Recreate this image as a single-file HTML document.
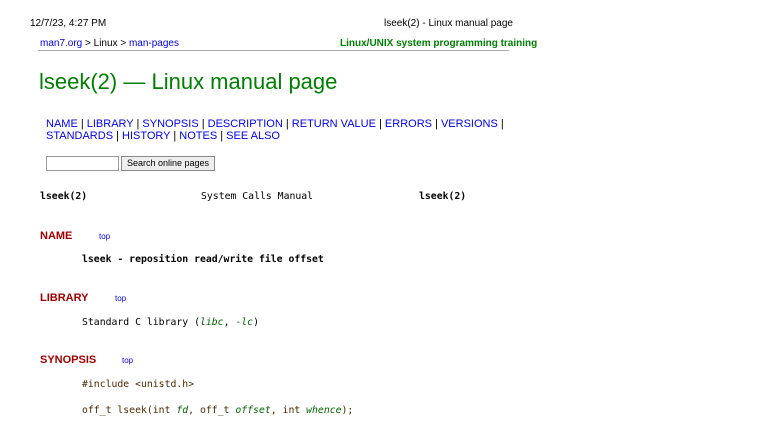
<!DOCTYPE html>
<html><head><meta charset="utf-8"><style>
body{margin:0;width:784px;height:441px;background:#fff;position:relative;overflow:hidden;font-family:"Liberation Sans",sans-serif}
.a{position:absolute;white-space:pre;line-height:1}
.b{color:#0000ee}
.m{font-family:"DejaVu Sans Mono","Liberation Mono",monospace;font-size:9.8px;color:#000;font-weight:bold}
.h{color:#a00000;font-weight:bold;font-size:11px}
.t{color:#0000ee;font-size:8px}
.g{color:#006400;font-weight:normal;font-style:italic}
.br{color:#4a2a00;font-weight:normal}
</style></head><body>
<div class="a" style="left:30px;top:19px;font-size:10px">12/7/23, 4:27 PM</div>
<div class="a" style="left:384px;top:19px;font-size:10px">lseek(2) - Linux manual page</div>
<div class="a" style="left:40px;top:39px;font-size:10px"><span class="b">man7.org</span> &gt; Linux &gt; <span class="b">man-pages</span></div>
<div class="a" style="left:340px;top:39px;font-size:10px;color:#008000;font-weight:bold">Linux/UNIX system programming training</div>
<div style="position:absolute;left:38px;top:50px;width:471px;height:1px;background:#aaa"></div>
<div class="a" style="left:39px;top:71px;font-size:22px;color:#008000">lseek(2) — Linux manual page</div>
<div class="a b" style="left:46px;top:119px;font-size:11px">NAME <span style="color:#000">|</span> LIBRARY <span style="color:#000">|</span> SYNOPSIS <span style="color:#000">|</span> DESCRIPTION <span style="color:#000">|</span> RETURN VALUE <span style="color:#000">|</span> ERRORS <span style="color:#000">|</span> VERSIONS <span style="color:#000">|</span></div>
<div class="a b" style="left:46px;top:131px;font-size:11px">STANDARDS <span style="color:#000">|</span> HISTORY <span style="color:#000">|</span> NOTES <span style="color:#000">|</span> SEE ALSO</div>
<div style="position:absolute;left:46px;top:156px;width:71px;height:13px;border:1px solid #999;background:#fff"></div>
<div class="a" style="left:121px;top:156px;width:92px;height:13px;border:1px solid #888;background:#eee;font-size:9px;text-align:center;line-height:13px">Search online pages</div>
<div class="a m" style="left:40px;top:192px">lseek(2)</div>
<div class="a m" style="left:201px;top:192px;font-weight:normal">System Calls Manual</div>
<div class="a m" style="left:419px;top:192px">lseek(2)</div>
<div class="a h" style="left:40px;top:231px">NAME</div><div class="a t" style="left:99px;top:233px">top</div>
<div class="a m" style="left:82px;top:255px">lseek - reposition read/write file offset</div>
<div class="a h" style="left:40px;top:293px">LIBRARY</div><div class="a t" style="left:115px;top:295px">top</div>
<div class="a m" style="left:82px;top:318px;font-weight:normal">Standard C library (<span class="g">libc</span>, <span class="g">-lc</span>)</div>
<div class="a h" style="left:40px;top:355px">SYNOPSIS</div><div class="a t" style="left:122px;top:357px">top</div>
<div class="a m br" style="left:82px;top:380px">#include &lt;unistd.h&gt;</div>
<div class="a m br" style="left:82px;top:406px">off_t lseek(int <span class="g">fd</span>, off_t <span class="g">offset</span>, int <span class="g">whence</span>);</div>
</body></html>
